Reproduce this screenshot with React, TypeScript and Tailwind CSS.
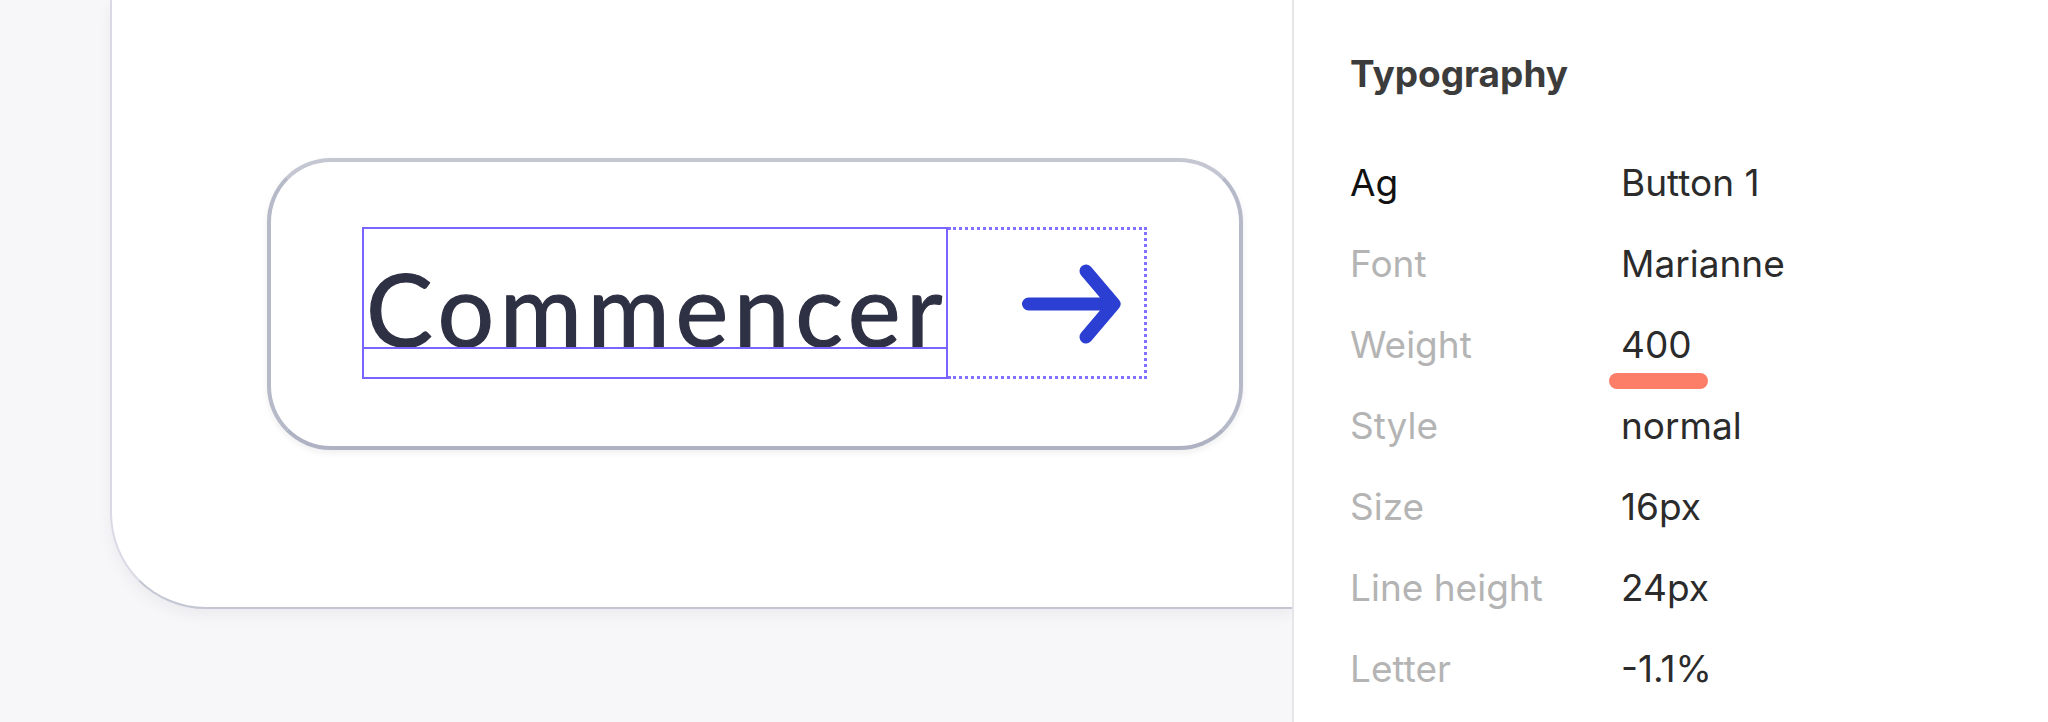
import React from "react";

const rows = [
  { label: "Font", value: "Marianne" },
  { label: "Weight", value: "400", mark: true },
  { label: "Style", value: "normal" },
  { label: "Size", value: "16px" },
  { label: "Line height", value: "24px" },
  { label: "Letter", value: "-1.1%" },
];

function ArrowIcon() {
  return (
    <svg width="196" height="146" viewBox="0 0 196 146" fill="none">
      <path
        d="M80.5 74 H165 M138 41 L166 74 L138 107"
        stroke="#2b3fd3"
        strokeWidth="13"
        strokeLinecap="round"
        strokeLinejoin="round"
      />
    </svg>
  );
}

export default function App() {
  return (
    <div className="flex h-[722px] w-full overflow-hidden bg-[#f7f7f9]">
      {/* canvas */}
      <div className="flex-1 flex items-start">
        <div className="ml-[110px] flex-1 h-[609px] bg-white border-l-2 border-b-2 border-[#d9dae6] border-b-[#c4c6d3] rounded-bl-[96px] shadow-[0_6px_16px_rgba(20,20,60,0.05)] pl-[155px] pt-[158px]">
          <div className="inline-flex items-center rounded-[64px] border-4 border-[#c4c7d2] border-b-[#aeb2c2] border-l-[#b6b9c8] border-r-[#b6b9c8] bg-white pl-[91px] pr-[92px] pt-[65px] pb-[67px] shadow-[0_3px_6px_rgba(30,30,60,0.07)]">
            <div className="flex">
              <div className="relative w-[586px] h-[152px] border-2 border-[#7864ff]">
                <div
                  className="h-full pt-[8px] pl-[2px] text-[100px] leading-[142px] tracking-[0.056em] text-[#2e3043] whitespace-nowrap [-webkit-text-stroke:1.2px_#2e3043]"
                  style={{ fontFamily: "Lato, 'Open Sans', sans-serif" }}
                >
                  Commencer
                </div>
                <div className="absolute left-0 right-0 top-[118px] h-[2px] bg-[#7864ff]" />
              </div>
              <div className="w-[199px] h-[152px] border-y-[3px] border-r-[3px] border-dotted border-[#8270ff] flex items-center">
                <ArrowIcon />
              </div>
            </div>
          </div>
        </div>
      </div>

      {/* inspector panel */}
      <div
        className="w-[756px] h-full bg-white border-l-2 border-[#e6e6e8] pl-[56px] pt-[50px]"
        style={{ fontFamily: "Inter, 'Liberation Sans', sans-serif" }}
      >
        <h2 className="text-[37px] leading-[48px] font-bold text-[#3c3c3c]">Typography</h2>
        <div className="mt-[44px] grid grid-cols-[271px_1fr] text-[37px] leading-[81px]">
          <div className="text-[#111111]">Ag</div>
          <div className="text-[#2b2b2b]">Button 1</div>
          {rows.map((r) => (
            <React.Fragment key={r.label}>
              <div className="text-[#b4b4b4]">{r.label}</div>
              <div className="relative text-[#2b2b2b]">
                {r.value}
                {r.mark && (
                  <span className="absolute left-[-12px] top-[69px] w-[99px] h-[16px] rounded-full bg-[#fd7e68]" />
                )}
              </div>
            </React.Fragment>
          ))}
        </div>
      </div>
    </div>
  );
}
